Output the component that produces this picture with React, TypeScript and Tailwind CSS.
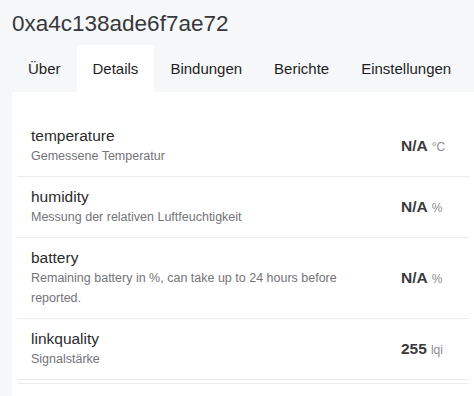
import React from 'react'

type Row = { name: string; desc: string; value: string; unit: string }

const rows: Row[] = [
  { name: 'temperature', desc: 'Gemessene Temperatur', value: 'N/A', unit: '°C' },
  { name: 'humidity', desc: 'Messung der relativen Luftfeuchtigkeit', value: 'N/A', unit: '%' },
  {
    name: 'battery',
    desc: 'Remaining battery in %, can take up to 24 hours before reported.',
    value: 'N/A',
    unit: '%',
  },
  { name: 'linkquality', desc: 'Signalstärke', value: '255', unit: 'lqi' },
]

const tabs = ['Über', 'Details', 'Bindungen', 'Berichte', 'Einstellungen']

export default function App() {
  return (
    <div
      className="h-[396px] w-[474px] overflow-hidden bg-[#f6f7f9] pl-3"
      style={{ fontFamily: '"Liberation Sans", Arial, sans-serif' }}
    >
      {/* Titel */}
      <h1 className="pt-[10px] text-[22.5px] leading-[28px] text-[#37383b]">0xa4c138ade6f7ae72</h1>

      {/* Tabs */}
      <div className="mt-[7px] flex h-[47px]">
        {tabs.map((t) => (
          <div
            key={t}
            className={
              t === 'Details'
                ? 'flex items-center rounded-t-[3px] bg-white px-4 pt-[2px] text-[15px] text-[#1f1f1f]'
                : 'flex items-center px-4 pt-[2px] text-[15px] text-[#1f1f1f]'
            }
          >
            {t}
          </div>
        ))}
      </div>

      {/* Inhalt */}
      <div className="h-[400px] w-[462px] bg-white pt-6">
        {rows.map((r) => (
          <div key={r.name} className="mx-[5px] flex items-center border-b border-[#ececec] py-[10px] pl-[14px]">
            <div className="w-[370px]">
              <div className="text-[15.5px] leading-[20px] text-[#2b2b2b]">{r.name}</div>
              <div className="w-[330px] text-[12.5px] leading-[20px] text-[#737478]">{r.desc}</div>
            </div>
            <div className="flex items-baseline gap-[4px]">
              <span className="text-[15.5px] font-semibold text-[#3a3a3c]">{r.value}</span>
              <span className="text-[12px] text-[#8a8a8e]">{r.unit}</span>
            </div>
          </div>
        ))}
        <div className="mx-[5px] mt-[3px] border-t border-[#ececec]" />
      </div>
    </div>
  )
}
